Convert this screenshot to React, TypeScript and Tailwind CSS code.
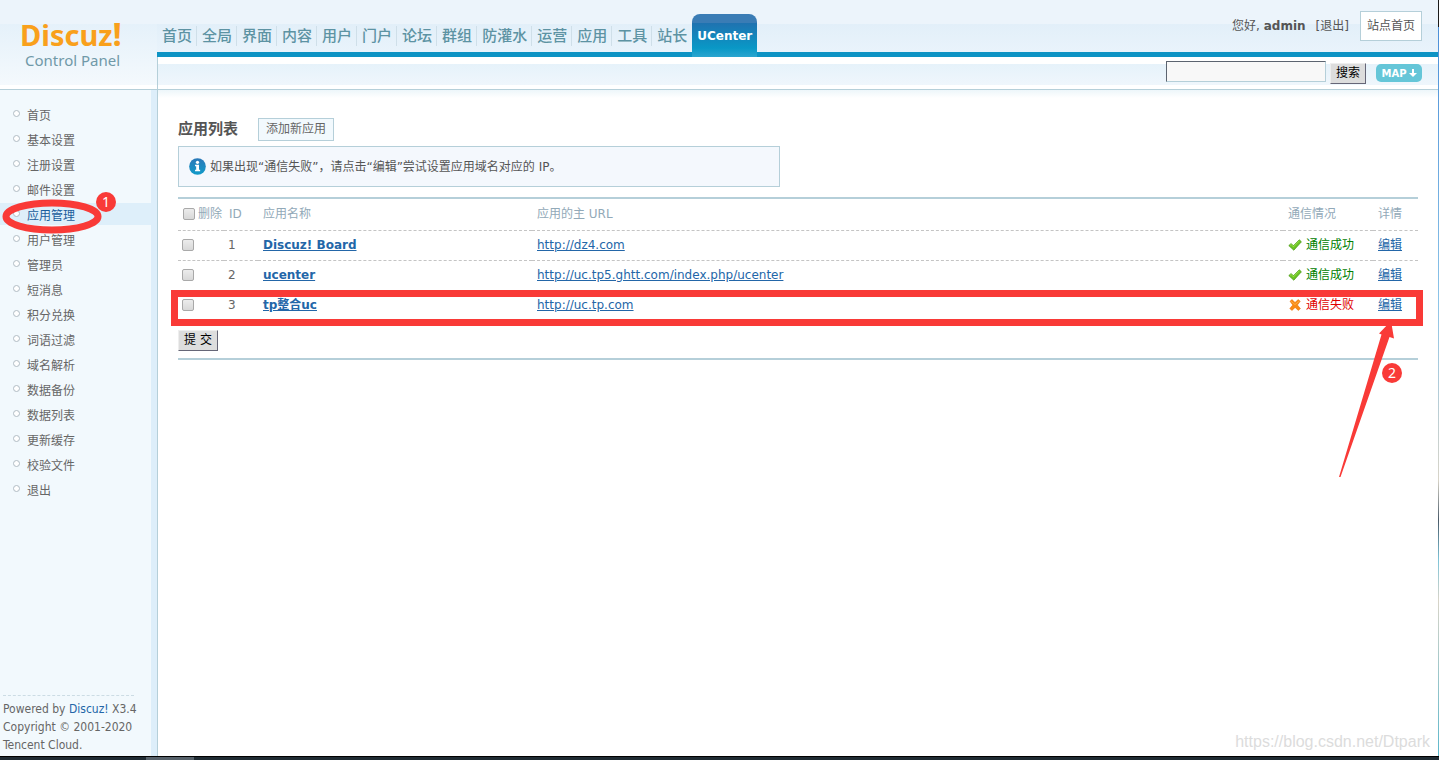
import type { ReactNode } from 'react';

const nav = ['首页', '全局', '界面', '内容', '用户', '门户', '论坛', '群组', '防灌水', '运营', '应用', '工具', '站长'];

const menu = [
  '首页', '基本设置', '注册设置', '邮件设置', '应用管理', '用户管理', '管理员', '短消息',
  '积分兑换', '词语过滤', '域名解析', '数据备份', '数据列表', '更新缓存', '校验文件', '退出',
];

const apps = [
  { id: 1, name: 'Discuz! Board', url: 'http://dz4.com', ok: true },
  { id: 2, name: 'ucenter', url: 'http://uc.tp5.ghtt.com/index.php/ucenter', ok: true },
  { id: 3, name: 'tp整合uc', url: 'http://uc.tp.com', ok: false },
];

const boxClass =
  'block size-3 appearance-none rounded-[2px] border border-[#a9a9a9] bg-linear-to-b from-[#ececec] to-[#d8d8d8] checked:from-[#7aa7d6] checked:to-[#4b7fb8]';

function CheckIcon() {
  return (
    <svg className="h-3 w-3.5 shrink-0" viewBox="0 0 14 12" aria-hidden="true">
      <path d="M0.8 6.6 3.2 4.6 5.4 6.8 11.3 0.8 13.4 2.8 5.8 11.2Z" fill="#6cc424" stroke="#4c9c18" strokeWidth="0.8" strokeLinejoin="round" />
      <path d="M2 6.4 3.2 5.5 5.4 7.8 11.3 1.9" fill="none" stroke="#a4e552" strokeWidth="0.8" />
    </svg>
  );
}

function CrossIcon() {
  return (
    <svg className="h-3 w-3.5 shrink-0" viewBox="0 0 14 12" aria-hidden="true">
      <path d="M2 2.3 4 0.6 7 3.5 10.2 0.6 12.2 2.3 9.4 6 12.4 9.6 10.3 11.4 7.1 8.4 4 11.4 1.8 9.6 4.8 6Z" fill="#f98a12" stroke="#e8720a" strokeWidth="0.6" strokeLinejoin="round" />
      <path d="M3 2.3 7 5.6 11.2 2.2" fill="none" stroke="#ffb347" strokeWidth="0.8" />
    </svg>
  );
}

function InfoIcon() {
  return (
    <svg className="size-[17px] shrink-0" viewBox="0 0 18 18" aria-hidden="true">
      <defs>
        <linearGradient id="info" x1="0" y1="0" x2="0" y2="1">
          <stop offset="0" stopColor="#2a78b8" />
          <stop offset="1" stopColor="#109bc9" />
        </linearGradient>
      </defs>
      <circle cx="9" cy="9" r="8.8" fill="url(#info)" />
      <circle cx="9" cy="4.6" r="1.7" fill="#fff" />
      <path d="M6.4 7.2H10.6V12.4H11.8V13.9H6.4V12.4H7.6V8.7H6.4Z" fill="#fff" />
    </svg>
  );
}

function Badge({ children, className }: { children: ReactNode; className: string }) {
  return (
    <span className={`absolute flex size-5 items-center justify-center rounded-full bg-[#f93a37] font-['Noto_Sans',sans-serif] text-sm text-white ${className}`}>
      {children}
    </span>
  );
}

function Header() {
  return (
    <header className="flex h-[90px] shrink-0 border-b border-[#b5cfd9] bg-[#ecf4fb]">
      <div className="flex w-[157px] shrink-0 flex-col bg-[linear-gradient(#ecf4fb_24px,#e5f1fa_24px,#f4f9fd_85px,#fff_85px)]">
        <a href="#home" className="flex flex-col pt-4 pl-5">
          <span className="flex h-9 items-baseline font-['Noto_Sans',sans-serif] text-[29px] leading-9 font-bold text-[#f9a01b]">
            Discuz<span className="text-[33px]">!</span>
          </span>
          <span className="pl-[5px] font-['Noto_Sans',sans-serif] text-[15px] leading-4 text-[#7099a8]">Control Panel</span>
        </a>
      </div>
      <div className="flex min-w-0 flex-1 flex-col">
        <div className="flex h-[57px] justify-between border-b-[5px] border-[#0d93c4] bg-[linear-gradient(#ecf4fb_24px,#e2eff9_24px,#e9f3fb)]">
          <nav className="flex items-end">
            {nav.map((item) => (
              <a
                key={item}
                href={`#${item}`}
                className="mb-1.5 border-r border-[#cfdfe9] pr-1 pl-[5px] text-[15px] leading-5 font-medium whitespace-nowrap text-[#5d93a3] last-of-type:border-transparent"
              >
                {item}
              </a>
            ))}
            <button
              type="button"
              className="-mb-[5px] h-[43px] rounded-t-lg bg-[linear-gradient(#3a7cb5_9px,#1f72b0_9px,#0998c6_34px,#2ba5cf)] px-[5px] text-xs font-bold text-white"
            >
              UCenter
            </button>
          </nav>
          <div className="flex items-start pr-4 text-xs leading-4 whitespace-nowrap text-[#555]">
            <span className="pt-[18px]">您好, <b>admin</b></span>
            <a href="#logout" className="pt-[18px] pl-2.5">[退出]</a>
            <a href="#site" className="mt-[11px] ml-[11px] border border-[#b5cfd9] bg-white px-1.5 py-[6px]">站点首页</a>
          </div>
        </div>
        <form className="flex h-8 items-center justify-end border-l border-[#b5cfd9] bg-[linear-gradient(#fff_7px,#e6f2fa_7px,#eff6fc_28px,#fff_28px)] pr-4" onSubmit={(e) => e.preventDefault()}>
          <input
            aria-label="搜索"
            className="mb-1 h-[21px] w-40 border border-t-[#5c6470] border-r-[#b5cfd9] border-b-[#b5cfd9] border-l-[#5c6470] bg-[#f8f8f8] px-1 text-xs outline-none"
          />
          <button type="submit" className="ml-1 h-[21px] border border-t-[#eee] border-r-[#667] border-b-[#667] border-l-[#eee] bg-[#ddd] px-[5px] text-xs leading-4 text-black">
            搜索
          </button>
          <button type="button" className="ml-2.5 flex h-[18px] w-[46px] items-center justify-center gap-0.5 rounded-[5px] bg-[#65c6d8] text-[10px] font-bold text-white">
            MAP
            <svg className="h-2 w-2" viewBox="0 0 8 8" aria-hidden="true">
              <path d="M3 0H5V4H8L4 8 0 4H3Z" fill="#fff" />
            </svg>
          </button>
        </form>
      </div>
    </header>
  );
}

function Sidebar() {
  return (
    <aside className="flex w-[158px] shrink-0 flex-col border-r border-[#b5cfd9] bg-[linear-gradient(to_right,#f2f9fd_151px,#ddeefa_151px)] text-xs text-[#666]">
      <ul className="flex flex-col gap-[3px] pt-[13px] pr-1.5">
        {menu.map((item) => {
          const active = item === '应用管理';
          return (
            <li key={item} className={`relative flex h-[22px] items-center pt-[3px] pl-[13px] ${active ? 'bg-[#deeffa]' : ''}`}>
              <span className="mb-1 size-[7px] rounded-full border border-[#b0bcc4] bg-white" />
              <a href={`#${item}`} className={`pl-[7px] ${active ? 'text-[#1a5d9c]' : ''}`}>{item}</a>
              {active && (
                <>
                  <svg className="pointer-events-none absolute -top-1 left-0 h-[35px] w-[104px]" viewBox="0 0 104 35" aria-hidden="true">
                    <ellipse cx="52" cy="17.5" rx="46" ry="13.5" fill="none" stroke="#f93a37" strokeWidth="7" />
                  </svg>
                  <Badge className="-top-[11px] left-24">1</Badge>
                </>
              )}
            </li>
          );
        })}
      </ul>
      <footer className="mt-auto pl-[3px] font-['DejaVu_Sans_Condensed','DejaVu_Sans',sans-serif] leading-[18px]">
        <div className="w-[131px] border-t border-dashed border-[#ccdce4] pt-1 pb-0.5 whitespace-nowrap">
          <p>Powered by <a href="#discuz" className="text-[#2366a8]">Discuz!</a> X3.4</p>
          <p>Copyright © 2001-2020</p>
          <p>Tencent Cloud.</p>
        </div>
      </footer>
    </aside>
  );
}

function AppTable() {
  return (
    <div className="relative mt-[10px] border-y-2 border-[#b5cfd9]">
      <table className="w-full table-fixed border-collapse text-left text-xs">
        <colgroup>
          <col className="w-[46px]" />
          <col className="w-[34px]" />
          <col className="w-[274px]" />
          <col />
          <col className="w-[90px]" />
          <col className="w-[45px]" />
        </colgroup>
        <thead className="text-[#92a9b8]">
          <tr className="h-[31px] border-b border-dashed border-[#c4c4c4]">
            <th className="pl-[5px] font-normal whitespace-nowrap">
              <label className="flex items-center gap-[3px]">
                <input type="checkbox" className={boxClass} />
                删除
              </label>
            </th>
            <th className="pl-[5px] font-normal">ID</th>
            <th className="pl-[5px] font-normal">应用名称</th>
            <th className="pl-[5px] font-normal">应用的主 URL</th>
            <th className="pl-[5px] font-normal">通信情况</th>
            <th className="pl-[5px] font-normal">详情</th>
          </tr>
        </thead>
        <tbody className="text-[#666]">
          {apps.map((app) => (
            <tr key={app.id} className="h-[30px] border-b border-dashed border-[#c4c4c4]">
              <td className="pl-1">
                <input type="checkbox" aria-label={app.name} className={boxClass} />
              </td>
              <td className="pl-1">{app.id}</td>
              <td className="pl-[5px] font-bold">
                <a href={`#app-${app.id}`} className="text-[#2366a8] underline">{app.name}</a>
              </td>
              <td className="pl-[5px]">
                <a href={app.url} className="text-[#2366a8] underline">{app.url}</a>
              </td>
              <td className="pl-[5px]">
                <span className={`flex items-center gap-1 whitespace-nowrap ${app.ok ? 'text-[#008000]' : 'text-[#e00000]'}`}>
                  {app.ok ? <CheckIcon /> : <CrossIcon />}
                  {app.ok ? '通信成功' : '通信失败'}
                </span>
              </td>
              <td className="pl-[5px]">
                <a href={`#edit-${app.id}`} className="text-[#2366a8] underline">编辑</a>
              </td>
            </tr>
          ))}
        </tbody>
      </table>
      <div className="flex h-[37px] items-start pt-[9px]">
        <button type="submit" className="h-[21px] w-10 border border-t-[#eee] border-r-[#667] border-b-[#667] border-l-[#eee] bg-[#ddd] text-xs leading-4 text-black">
          提 交
        </button>
      </div>
      <div className="pointer-events-none absolute top-[91px] -right-[5px] -left-[7px] h-9 border-[7px] border-[#f93a37]" />
      <svg className="pointer-events-none absolute top-[122px] right-[20px] h-[158px] w-[60px]" viewBox="0 0 60 158" aria-hidden="true">
        <path d="M53 0 56 17.500 51.500 16 2.500 156 1 156 43.500 13.500 41 12.500Z" fill="#f93a37" />
      </svg>
      <Badge className="top-[164px] right-4">2</Badge>
    </div>
  );
}

export default function App() {
  return (
    <div className="flex min-h-screen flex-col bg-white font-['DejaVu_Sans','Noto_Sans_CJK_SC',sans-serif]">
      <div className="flex flex-1">
        <div className="flex min-w-0 flex-1 flex-col">
          <Header />
          <div className="flex flex-1">
            <Sidebar />
            <main className="relative min-w-0 flex-1 bg-[linear-gradient(#edf6fa,#fff_8px)] px-5 pt-7">
              <div className="flex h-[22px] items-center gap-5">
                <h1 className="text-[15px] leading-5 font-bold text-[#555]">应用列表</h1>
                <button type="button" className="h-[23px] border border-[#b5cfd9] bg-[#f2f9fd] px-[7px] text-xs leading-4 text-[#666]">
                  添加新应用
                </button>
              </div>
              <div className="mt-1.5 flex h-[41px] w-[602px] max-w-full items-center gap-1 border border-[#b5cfd9] bg-[#f4f8fd] pl-2.5 text-xs text-[#555]">
                <InfoIcon />
                <p>如果出现“通信失败”，请点击“编辑”尝试设置应用域名对应的 IP。</p>
              </div>
              <form onSubmit={(e) => e.preventDefault()}>
                <AppTable />
              </form>
              <span className="absolute right-2 bottom-1 font-['Liberation_Sans',sans-serif] text-base leading-5 text-[#dcdcdc]">
                https://blog.csdn.net/Dtpark
              </span>
            </main>
          </div>
        </div>
        <div className="w-px bg-[linear-gradient(#1a1a1a_27px,#4b8fd8_27px,#8cc4e8_300px,#d8d4c8_480px,#4a5a68_520px,#7ec4d8_560px,#d8d4c8_600px,#5cb8cc)]" />
      </div>
      <div className="flex h-1 border-t border-black bg-[#1f2b33]">
        <div className="ml-[146px] w-12 bg-[#56616a]" />
      </div>
    </div>
  );
}
